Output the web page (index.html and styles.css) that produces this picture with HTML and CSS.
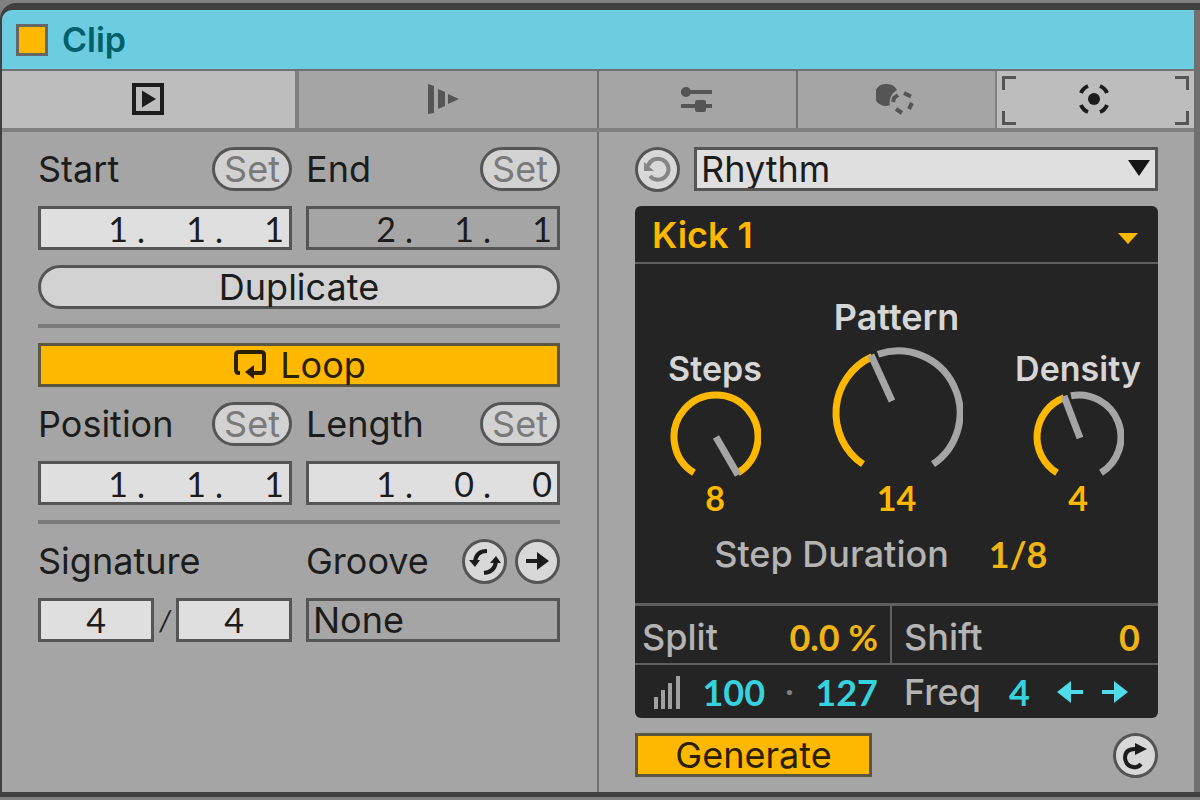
FILE: index.html
```html
<!DOCTYPE html>
<html lang="en">
<head>
<meta charset="utf-8">
<title>Clip</title>
<link rel="stylesheet" href="styles.css">
</head>
<body>
<main class="frame">
  <header class="title-bar">
    <button class="activator" aria-label="Clip activator"></button>
    <h1 class="title">Clip</h1>
  </header>

  <nav class="tabs" aria-label="Clip panels">
    <div class="tab-group views">
      <button class="tab selected" aria-label="Clip">
        <svg width="34" height="34" viewBox="0 0 34 34"><rect x="2" y="2" width="28" height="28" fill="none" stroke="#1c1c1c" stroke-width="4"/><path d="M10 7.500L24 16L10 24.500Z" fill="#1c1c1c"/></svg>
      </button>
      <button class="tab" aria-label="Follow action">
        <svg width="40" height="34" viewBox="0 0 40 34"><path d="M0 1L6 3V30L0 31ZM10 6L17 9V23L10 26ZM20 11L31 16L20 21Z" fill="#555"/></svg>
      </button>
    </div>
    <div class="tab-rule"></div>
    <div class="tab-group">
      <button class="tab" aria-label="Transpose">
        <svg width="34" height="34" viewBox="0 0 34 34"><path d="M0 9H31M0 23H31" stroke="#555" stroke-width="4"/><circle cx="5" cy="9" r="5" fill="#555"/><rect x="14" y="17" width="11" height="12" rx="2" fill="#555"/></svg>
      </button>
      <button class="tab" aria-label="Transform">
        <svg width="42" height="34" viewBox="0 0 42 34"><path d="M11 1A11 11 0 0 1 21 7A14 14 0 0 0 14 22A11 11 0 1 1 11 1Z" fill="#555"/><path d="M17 19L18 15L22 12M28 10L35 13.500M36 20L33 26M20 26L26 30" fill="none" stroke="#555" stroke-width="4"/></svg>
      </button>
      <button class="tab selected focused" aria-label="Generate">
        <svg width="34" height="34" viewBox="0 0 34 34"><circle cx="15" cy="16" r="6" fill="#1c1c1c"/><path d="M2 10Q4 5 9 3M21 3Q26 5 28 10M28 22Q26 27 21 29M9 29Q4 27 2 22" fill="none" stroke="#1c1c1c" stroke-width="4"/></svg>
        <span class="corner tl"></span><span class="corner tr"></span><span class="corner bl"></span><span class="corner br"></span>
      </button>
    </div>
  </nav>

  <div class="panels">
    <section class="clip-panel" aria-label="Clip properties">
      <div class="pair">
        <div class="label-row"><span>Start</span><button class="pill">Set</button></div>
        <div class="label-row"><span>End</span><button class="pill">Set</button></div>
        <div class="time"><input value="1" aria-label="Start bar"><i>.</i><input value="1" aria-label="Start beat"><i>.</i><input value="1" aria-label="Start sixteenth"></div>
        <div class="time dim"><input value="2" aria-label="End bar"><i>.</i><input value="1" aria-label="End beat"><i>.</i><input value="1" aria-label="End sixteenth"></div>
      </div>
      <button class="pill wide">Duplicate</button>
      <hr class="rule">
      <button class="block">
        <svg width="34" height="32" viewBox="0 0 34 32"><path d="M8 24H7Q4 24 4 21V6Q4 3 7 3H29Q32 3 32 6V21Q32 24 29 24H20" fill="none" stroke="#2a2000" stroke-width="4"/><path d="M13 23L22 16V30Z" fill="#2a2000"/></svg>
        Loop
      </button>
      <div class="pair">
        <div class="label-row"><span>Position</span><button class="pill">Set</button></div>
        <div class="label-row"><span>Length</span><button class="pill">Set</button></div>
        <div class="time"><input value="1" aria-label="Position bar"><i>.</i><input value="1" aria-label="Position beat"><i>.</i><input value="1" aria-label="Position sixteenth"></div>
        <div class="time"><input value="1" aria-label="Length bars"><i>.</i><input value="0" aria-label="Length beats"><i>.</i><input value="0" aria-label="Length sixteenths"></div>
      </div>
      <hr class="rule">
      <div class="pair">
        <div class="label-row"><span>Signature</span></div>
        <div class="label-row"><label for="groove">Groove</label>
          <span class="round-group">
            <button class="round" aria-label="Hot-swap groove"><svg width="45" height="45" viewBox="0 0 45 45"><path d="M25 12Q14 12 13 23M22 34Q33 33 34 22" fill="none" stroke="#1c1c1c" stroke-width="4"/><path d="M7 21H18L13 28ZM28 24H39L34 17Z" fill="#1c1c1c"/></svg></button>
            <button class="round" aria-label="Commit groove"><svg width="45" height="45" viewBox="0 0 45 45"><path d="M11 22H26" stroke="#1c1c1c" stroke-width="4"/><path d="M22 13L34 22L22 31Z" fill="#1c1c1c"/></svg></button>
          </span>
        </div>
        <div class="signature"><input value="4" aria-label="Numerator"><span>/</span><input value="4" aria-label="Denominator"></div>
        <select class="select dim" id="groove"><option>None</option></select>
      </div>
    </section>

    <div class="divider"></div>

    <section class="tool-panel" aria-label="Generate">
      <div class="tool-row">
        <button class="round" aria-label="Reset"><svg width="45" height="45" viewBox="0 0 45 45"><path d="M13 19A10.500 10.500 0 1 1 15 29" fill="none" stroke="#858585" stroke-width="4"/><path d="M9 15V24H19Z" fill="#858585"/></svg></button>
        <div class="select-wrap">
          <select class="select" aria-label="Generator"><option>Rhythm</option></select>
          <svg class="arrow" width="22" height="16" viewBox="0 0 22 16"><path d="M0 0H22L11 16Z" fill="#141414"/></svg>
        </div>
      </div>

      <div class="device">
        <div class="select-wrap voice">
          <select class="voice-select" aria-label="Voice"><option>Kick 1</option></select>
          <svg class="arrow" width="20" height="11" viewBox="0 0 20 11"><path d="M0 0H20L10 11Z" fill="#ffb800"/></svg>
        </div>
        <div class="device-body">
          <div class="knobs">
            <div class="knob">
              <label for="steps">Steps</label>
              <div class="dial"><svg width="92" height="88" viewBox="-47 -46 92 88"><path d="M-22 35.800A42 42 0 1 1 22 35.800" fill="none" stroke="#ffb800" stroke-width="7"/><path d="M0 0L22 38" stroke="#a5a5a5" stroke-width="7"/></svg><input id="steps" type="range" min="1" max="8" value="8"></div>
              <output for="steps">8</output>
            </div>
            <div class="knob">
              <label class="big" for="pattern">Pattern</label>
              <div class="dial large"><svg width="132" height="132" viewBox="-67 -66 132 132"><path d="M-35 51.200A62 62 0 0 1 -26 -56.300" fill="none" stroke="#ffb800" stroke-width="7"/><path d="M-20 -58.700A62 62 0 0 1 35 51.200" fill="none" stroke="#a5a5a5" stroke-width="7"/><path d="M-27 -58L-6 -12" stroke="#a5a5a5" stroke-width="7"/></svg><input id="pattern" type="range" min="1" max="35" value="14"></div>
              <output for="pattern">14</output>
            </div>
            <div class="knob">
              <label for="density">Density</label>
              <div class="dial"><svg width="92" height="88" viewBox="-47 -46 92 88"><path d="M-22 35.800A42 42 0 0 1 -15 -39.200" fill="none" stroke="#ffb800" stroke-width="7"/><path d="M-8 -41.200A42 42 0 0 1 22 35.800" fill="none" stroke="#a5a5a5" stroke-width="7"/><path d="M-15 -41L1 1" stroke="#a5a5a5" stroke-width="7"/></svg><input id="density" type="range" min="0" max="8" value="4"></div>
              <output for="density">4</output>
            </div>
          </div>
          <div class="duration"><label for="duration">Step Duration</label><input id="duration" value="1/8"></div>
        </div>
        <div class="params">
          <div class="param ruled"><label for="split">Split</label><input id="split" value="0.0 %"></div>
          <div class="param"><label for="shift">Shift</label><input id="shift" value="0"></div>
        </div>
        <div class="params last">
          <div class="param velocity">
            <svg width="28" height="34" viewBox="0 0 28 34"><path d="M2 22V34M9 15V34M16 8V34M24 1V34" stroke="#a0a0a0" stroke-width="4"/></svg>
            <input value="100" aria-label="Velocity from"><span class="dot">·</span><input value="127" aria-label="Velocity to">
          </div>
          <div class="param freq"><label for="freq">Freq</label><input id="freq" value="4">
            <span class="nudges">
              <button aria-label="Earlier"><svg width="27" height="24" viewBox="0 0 27 24"><path d="M0 12L14 1V10H26V14H14V23Z" fill="#50dbe8"/></svg></button>
              <button aria-label="Later"><svg width="27" height="24" viewBox="0 0 27 24"><path d="M26 12L12 1V10H0V14H12V23Z" fill="#50dbe8"/></svg></button>
            </span>
          </div>
        </div>
      </div>

      <div class="tool-row">
        <button class="block generate">Generate</button>
        <button class="round" aria-label="Auto apply"><svg width="45" height="45" viewBox="0 0 45 45"><path d="M28 31Q25 35 20 34Q13 33 12 25Q12 16 22 16H26" fill="none" stroke="#1c1c1c" stroke-width="4"/><path d="M22 10L34 16L22 22Z" fill="#1c1c1c"/></svg></button>
      </div>
    </section>
  </div>
</main>
</body>
</html>
```
FILE: styles.css
```css
* { box-sizing: border-box; }

body {
  margin: 0;
  min-height: 100vh;
  padding: 3px 0;
  display: flex;
  background: #808080;
  color: #1c1c1c;
  font: 36px/44px Inter, "Liberation Sans", sans-serif;
}

button, input, select {
  margin: 0;
  padding: 0;
  border: 0;
  border-radius: 0;
  background: none;
  color: inherit;
  font: inherit;
  appearance: none;
}

input { min-width: 0; font-family: Lato, sans-serif; }
svg { display: block; flex: none; }

.frame {
  flex: 1;
  min-width: 0;
  display: flex;
  flex-direction: column;
  padding-right: 6px;
  background: #707070;
  border: solid #404040;
  border-width: 7px 0 5px 2px;
  border-top-left-radius: 16px;
}

.title-bar {
  display: flex;
  align-items: center;
  gap: 14px;
  height: 61px;
  padding-left: 14px;
  background: #6dcde0;
  border-bottom: 2px solid #707070;
  border-top-left-radius: 10px;
}
.activator { width: 32px; height: 32px; background: #ffb800; border: 3px solid #666; }
.title { margin: 0; font-size: 34px; font-weight: 600; color: #00606c; }

.tabs {
  display: grid;
  grid-template-columns: minmax(0, 1fr) 2px minmax(0, 1fr);
  height: 61px;
  border-bottom: 4px solid #808080;
}
.tab-rule { background: #707070; }
.tab-group { display: flex; gap: 2px; background: #707070; }
.views { display: grid; grid-template-columns: 293fr 298fr; gap: 4px; background: #808080; }
.tab {
  position: relative;
  flex: 1;
  display: flex;
  align-items: center;
  justify-content: center;
  background: #a5a5a5;
}
.tab.selected { background: #bdbdbd; }
.tab.focused { box-shadow: -2px 0 0 #808080; }
.corner { position: absolute; width: 14px; height: 14px; border: 0 solid #555; }
.tl { left: 5px; top: 5px; border-width: 3px 0 0 3px; }
.tr { right: 5px; top: 5px; border-width: 3px 3px 0 0; }
.bl { left: 5px; bottom: 3px; border-width: 0 0 3px 3px; }
.br { right: 5px; bottom: 3px; border-width: 0 3px 3px 0; }

.panels {
  flex: 1;
  display: grid;
  grid-template-columns: minmax(0, 1fr) 2px minmax(0, 1fr);
  background: #a5a5a5;
}
.divider { background: #707070; }

.clip-panel, .tool-panel {
  display: flex;
  flex-direction: column;
  gap: 15px;
  padding: 15px 36px;
}
.clip-panel { padding-right: 37px; }
.pair { display: grid; grid-template-columns: repeat(2, minmax(0, 1fr)); gap: 15px 14px; }
.label-row { display: flex; justify-content: space-between; height: 44px; }

.pill {
  width: 80px;
  height: 44px;
  line-height: 38px;
  border: 3px solid #555;
  border-radius: 22px;
  background: #d2d2d2;
  color: #7a7a7a;
}
.pill.wide { width: 100%; color: #1c1c1c; }

.time, .signature input, .select {
  height: 44px;
  border: 3px solid #555;
  background: #dfdfdf;
}
.time { display: flex; justify-content: flex-end; padding: 2px 4px 0 0; font: 34px/38px Lato, sans-serif; }
.time input { width: 22px; text-align: center; }
.time i { width: 56px; padding-left: 8px; font-style: normal; }
.time.dim, .select.dim { background: #a5a5a5; }

.rule { width: 100%; height: 4px; margin: 0; border: 0; background: #7b7b7b; }

.block {
  display: flex;
  align-items: center;
  justify-content: center;
  gap: 14px;
  height: 44px;
  line-height: 38px;
  border: 3px solid #5c5540;
  background: #ffb800;
  color: #2a2000;
}

.signature { display: flex; font-family: Lato, sans-serif; font-size: 34px; }
.signature input { flex: 1; width: 0; text-align: center; }
.signature span { width: 22px; text-align: center; font-size: 28px; font-style: italic; }

.round-group { display: flex; gap: 8px; }
.round {
  flex: none;
  display: flex;
  align-items: center;
  justify-content: center;
  width: 45px;
  height: 45px;
  border: 3px solid #555;
  border-radius: 50%;
  background: #d8d8d8;
}

.select { width: 100%; padding: 0 4px; line-height: 38px; }
.tool-row { display: flex; justify-content: space-between; gap: 14px; height: 44px; }
.select-wrap { position: relative; flex: 1; }
.arrow { position: absolute; right: 8px; top: 13px; pointer-events: none; }

.device { background: #242424; border-radius: 6px; color: #b4b4b4; }
.voice { border-bottom: 2px solid #5f5f5f; }
.voice .arrow { right: 20px; top: 27px; }
.voice-select {
  display: block;
  width: 100%;
  height: 56px;
  padding: 2px 17px 0;
  font-weight: 600;
  color: #ffb800;
}
.device-body { padding: 31px 15px 27px; border-bottom: 3px solid #5f5f5f; }
.knobs { display: flex; justify-content: space-between; align-items: flex-end; }
.knob {
  display: flex;
  flex-direction: column;
  align-items: center;
  width: 130px;
  font-size: 34px;
  font-weight: 600;
  color: #d6d6d6;
}
.knob label { white-space: nowrap; }
.knob .big { font-size: 36px; }
.knob output { font: 700 34px/38px Lato, sans-serif; color: #ffb800; }
.dial { position: relative; }
.dial.large { padding-top: 8px; }
.dial input { position: absolute; inset: 0; width: 100%; opacity: 0; }
.duration { display: flex; justify-content: center; gap: 40px; padding: 15px 30px 0 0; font-weight: 500; }
.duration input { width: 60px; color: #f0b414; font-weight: 700; }

.params { display: grid; grid-template-columns: minmax(0, 257fr) minmax(0, 266fr); height: 59px; border-bottom: 2px solid #5f5f5f; }
.params.last { height: 53px; border: 0; }
.param {
  display: flex;
  align-items: center;
  justify-content: space-between;
  padding: 4px 18px 0 12px;
  font-weight: 500;
}
.param:first-child { padding: 4px 12px 0 7px; }
.param.ruled { border-right: 2px solid #5f5f5f; }
.param input { width: 100px; text-align: right; color: #f0b414; font-weight: 700; }
.params .velocity { padding: 0 14px 0 19px; }
.param.velocity input, .param.freq input { width: 64px; color: #36d2de; }
.params .freq { padding: 0 29px 0 12px; }
.param.freq input { width: 22px; }
.dot { color: #808080; }
.nudges { display: flex; gap: 18px; }

.generate { width: 237px; }
```
